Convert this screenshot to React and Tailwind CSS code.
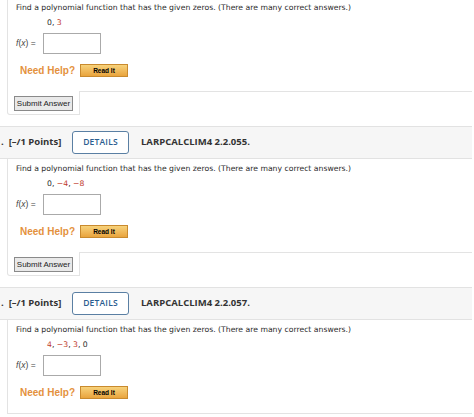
const questions = [
  { zeros: [['0', false], ['3', true]], code: null },
  { zeros: [['0', false], ['−4', true], ['−8', true]], code: 'LARPCALCLIM4 2.2.055.' },
  { zeros: [['4', true], ['−3', true], ['3', true], ['0', false]], code: 'LARPCALCLIM4 2.2.057.' },
];

function Header({ code }) {
  return (
    <div className="flex h-[33px] w-[472px] items-center border-y border-[#e2e2e2] bg-[#f6f6f6] font-['Open_Sans',sans-serif] text-[9.5px] font-bold text-[#333]">
      <span className="w-[68px] pl-px">. &nbsp;[–/1 Points]</span>
      <span className="ml-[4px] flex h-[23px] w-[57px] items-center justify-center rounded-[3px] border border-[#5a7fa3] bg-white text-[8.5px] font-semibold tracking-[0.2px] text-[#2a5d8f]">
        DETAILS
      </span>
      <span className="ml-[12px]">{code}</span>
    </div>
  );
}

function Body({ zeros, last }) {
  return (
    <div className="ml-[7px] flex flex-col">
      <div className="flex w-[465px] flex-col border-b border-l border-[#e3e3e3] pb-[14px] pl-[8px] font-['DejaVu_Sans',sans-serif] text-[7.7px] text-[#2a2a2a]">
        <p className="mt-[4px] h-[11px] leading-[11px]">
          Find a polynomial function that has the given zeros. (There are many correct answers.)
        </p>
        <p className="mt-[4px] ml-[31px] h-[11px] leading-[11px]">
          {zeros.map(([z, red], i) => (
            <span key={i}>
              <span className={red ? 'text-[#c0392b]' : ''}>{z}</span>
              {i < zeros.length - 1 ? ', ' : ''}
            </span>
          ))}
        </p>
        <div className="mt-[5px] flex h-[21px] items-center font-['Liberation_Sans',sans-serif] text-[8.5px] text-[#444]">
          <span className="w-[27px]">
            <i>f</i>(<i>x</i>) =
          </span>
          <span className="h-[21px] w-[58px] border border-[#aaa] bg-white" />
        </div>
        <div className="mt-[10px] flex h-[13px] items-center">
          <span className="ml-[4px] w-[60px] font-['Liberation_Sans',sans-serif] text-[10px] leading-[13px] font-bold text-[#e4913d]">
            Need Help?
          </span>
          <span className="flex h-[13px] w-[48px] items-center justify-center border border-[#c98a2e] bg-gradient-to-b from-[#f7d27a] to-[#e9a43c] font-['Liberation_Sans',sans-serif] text-[6.5px] font-bold text-black">
            Read It
          </span>
        </div>
      </div>
      {!last && (
        <div className="-mt-px w-[73px] rounded-bl-[3px] border-x border-b border-[#e3e3e3] bg-white px-[6px] pt-[5px] pb-[3px]">
          <span className="flex h-[15px] w-[59px] items-center justify-center border border-[#8a8a8a] bg-[#e9e9e9] font-['Liberation_Sans',sans-serif] text-[8px] whitespace-nowrap text-[#222]">
            Submit Answer
          </span>
        </div>
      )}
    </div>
  );
}

export default function App() {
  return (
    <div className="h-[417px] w-[474px] overflow-hidden bg-white">
      <div className="-mt-[2px] flex flex-col">
        {questions.map((q, i) => (
          <div key={i} className={i > 0 ? 'mt-[11px] flex flex-col' : 'flex flex-col'}>
            {q.code && <Header code={q.code} />}
            <Body zeros={q.zeros} last={i === questions.length - 1} />
          </div>
        ))}
      </div>
    </div>
  );
}
